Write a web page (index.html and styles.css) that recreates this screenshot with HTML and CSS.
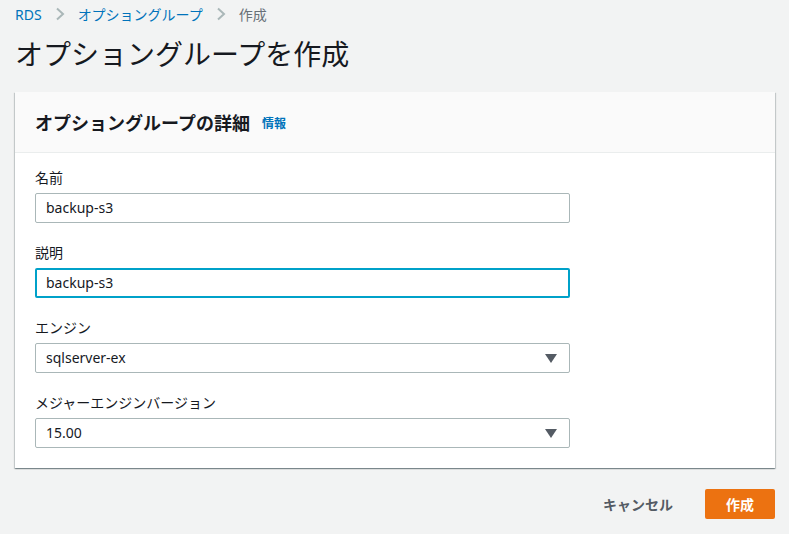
FILE: index.html
```html
<!DOCTYPE html>
<html lang="ja">
<head>
<meta charset="utf-8">
<link rel="stylesheet" href="styles.css">
</head>
<body>
<div class="page">
  <nav class="crumbs">
    <a class="crumb-link">RDS</a>
    <span class="chev"><svg width="10" height="14" viewBox="0 0 10 14"><path d="M2 1.5 L8 7 L2 12.5" fill="none" stroke="#aab7b8" stroke-width="2"/></svg></span>
    <a class="crumb-link">オプショングループ</a>
    <span class="chev"><svg width="10" height="14" viewBox="0 0 10 14"><path d="M2 1.5 L8 7 L2 12.5" fill="none" stroke="#aab7b8" stroke-width="2"/></svg></span>
    <span class="crumb-current">作成</span>
  </nav>
  <h1 class="title">オプショングループを作成</h1>
  <section class="card">
    <div class="card-head">
      <h2 class="card-title">オプショングループの詳細</h2>
      <a class="info">情報</a>
    </div>
    <div class="card-body">
      <div class="field">
        <div class="label">名前</div>
        <div class="input">backup-s3</div>
      </div>
      <div class="field">
        <div class="label">説明</div>
        <div class="input focus">backup-s3</div>
      </div>
      <div class="field">
        <div class="label">エンジン</div>
        <div class="input select">sqlserver-ex<span class="caret"></span></div>
      </div>
      <div class="field">
        <div class="label">メジャーエンジンバージョン</div>
        <div class="input select">15.00<span class="caret"></span></div>
      </div>
    </div>
  </section>
  <div class="actions">
    <span class="cancel">キャンセル</span>
    <span class="primary">作成</span>
  </div>
</div>
</body>
</html>
```
FILE: styles.css
```css
html, body {
  margin: 0;
  padding: 0;
  background: #f2f3f3;
  font-family: "Noto Sans", "Noto Sans CJK JP", sans-serif;
  color: #16191f;
}
.page {
  padding: 3px 14px 0 15px;
}
.crumbs {
  display: flex;
  align-items: center;
  height: 22px;
  font-size: 14px;
  gap: 13px;
}
.crumb-link {
  color: #0073bb;
}
.chev {
  display: flex;
  align-items: center;
}
.crumb-current {
  color: #687078;
}
.title {
  margin: 9px 0 0 0;
  font-size: 28px;
  font-weight: 400;
  line-height: 40px;
  height: 46px;
}
.card {
  margin-top: 12px;
  background: #fff;
  box-shadow: 0 1px 1px 0 rgba(0,28,36,0.3), 1px 1px 1px 0 rgba(0,28,36,0.15), -1px 1px 1px 0 rgba(0,28,36,0.15);
}
.card-head {
  height: 60px;
  background: #fafafa;
  border-bottom: 1px solid #eaeded;
  display: flex;
  align-items: center;
  padding: 0 20px;
  gap: 12px;
}
.card-title {
  margin: 0;
  font-size: 18px;
  font-weight: 700;
}
.info {
  font-size: 12px;
  font-weight: 700;
  color: #0073bb;
  margin-top: 2px;
}
.card-body {
  padding: 15px 20px 20px 20px;
  display: flex;
  flex-direction: column;
  gap: 20px;
}
.field {
  display: flex;
  flex-direction: column;
}
.label {
  font-size: 14px;
  line-height: 20px;
  margin-bottom: 5px;
}
.input {
  box-sizing: border-box;
  width: 535px;
  height: 30px;
  border: 1px solid #aab7b8;
  border-radius: 2px;
  padding: 0 11px 0 10px;
  font-size: 14px;
  line-height: 28px;
  display: flex;
  align-items: center;
  justify-content: space-between;
}
.input.focus {
  border: 2px solid #00a1c9;
  padding: 0 10px 0 9px;
}
.caret {
  width: 0;
  height: 0;
  border-left: 6px solid transparent;
  border-right: 6px solid transparent;
  border-top: 9px solid #545b64;
  margin-right: 1px;
}
.actions {
  display: flex;
  justify-content: flex-end;
  align-items: center;
  margin-top: 21px;
  gap: 32px;
}
.cancel {
  font-size: 14px;
  font-weight: 700;
  color: #545b64;
}
.primary {
  width: 70px;
  height: 30px;
  box-sizing: border-box;
  background: #ec7211;
  border-radius: 2px;
  color: #fff;
  font-size: 14px;
  font-weight: 700;
  display: flex;
  align-items: center;
  justify-content: center;
}
```
